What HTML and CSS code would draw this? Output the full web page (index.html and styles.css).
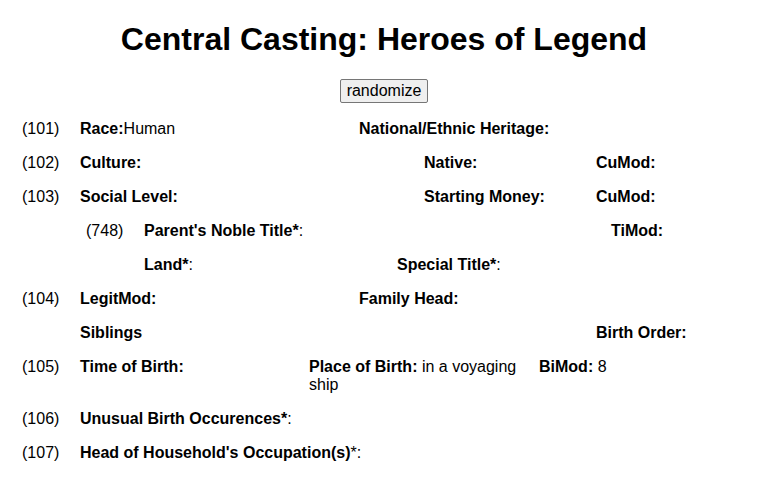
FILE: index.html
```html
<!DOCTYPE html>
<html lang="en">
<head>
    <meta charset="UTF-8">
    <meta name="viewport" content="width=device-width, initial-scale=1.0">
    <title>Central Casting: Heroes of Legend</title>
    <link rel="stylesheet" href="styles.css">
</head>
<body>

    <h1>Central Casting: Heroes of Legend</h1>

    <div class="controls">
        <button type="button" class="randomize-button">randomize</button>
    </div>

    <!-- Character sheet, one line per table -->
    <div class="sheet">
        <div class="row">
            <span class="num">(101)</span>
            <span class="cell w-race"><b>Race:</b>Human</span>
            <span class="cell"><b>National/Ethnic Heritage:</b></span>
        </div>

        <div class="row">
            <span class="num">(102)</span>
            <span class="cell w-wide"><b>Culture:</b></span>
            <span class="cell w-mid"><b>Native:</b></span>
            <span class="cell"><b>CuMod:</b></span>
        </div>

        <div class="row">
            <span class="num">(103)</span>
            <span class="cell w-wide"><b>Social Level:</b></span>
            <span class="cell w-mid"><b>Starting Money:</b></span>
            <span class="cell"><b>CuMod:</b></span>
        </div>

        <!-- nobility sub-table -->
        <div class="row sub">
            <span class="num">(748)</span>
            <span class="cell w-title"><b>Parent's Noble Title*</b>:</span>
            <span class="cell"><b>TiMod:</b></span>
        </div>

        <div class="row sub-indent">
            <span class="cell w-land"><b>Land*</b>:</span>
            <span class="cell"><b>Special Title*</b>:</span>
        </div>

        <div class="row">
            <span class="num">(104)</span>
            <span class="cell w-race"><b>LegitMod:</b></span>
            <span class="cell"><b>Family Head:</b></span>
        </div>

        <div class="row no-num">
            <span class="cell w-siblings"><b>Siblings</b></span>
            <span class="cell"><b>Birth Order:</b></span>
        </div>

        <div class="row">
            <span class="num">(105)</span>
            <span class="cell w-time"><b>Time of Birth:</b></span>
            <span class="cell w-place"><b>Place of Birth:</b> in a voyaging ship</span>
            <span class="cell"><b>BiMod:</b> 8</span>
        </div>

        <div class="row">
            <span class="num">(106)</span>
            <span class="cell"><b>Unusual Birth Occurences*</b>:</span>
        </div>

        <div class="row">
            <span class="num">(107)</span>
            <span class="cell"><b>Head of Household's Occupation(s)</b>*:</span>
        </div>
    </div>

</body>
</html>
```

FILE: styles.css
```css
body {
    font-family: "Liberation Sans", Arial, sans-serif;
    font-size: 16px;
    color: #000;
    background-color: #fff;
    margin: 8px;
}

h1 {
    text-align: center;
    font-size: 32px;
    margin: 13px 0 21px;
}

.controls {
    text-align: center;
}

.randomize-button {
    font-family: "Liberation Sans", Arial, sans-serif;
    font-size: 16px;
    padding: 1px 6px;
    background-color: #efefef;
    border: 1px solid #767676;
    border-radius: 2px;
    color: #000;
    line-height: 20px;
}

.sheet {
    margin-top: 9px;
    padding: 0 14px;
}

.row {
    display: flex;
    align-items: flex-start;
    padding: 8px 0;
    line-height: 18px;
}

/* nested rows start further in */
.sub {
    padding-left: 64px;
}

.sub-indent {
    padding-left: 122px;
}

.no-num {
    padding-left: 58px;
}

.num {
    width: 58px;
    flex-shrink: 0;
}

.cell {
    flex-shrink: 0;
}

/* column widths */
.w-race { width: 279px; }
.w-wide { width: 344px; }
.w-mid { width: 172px; }
.w-title { width: 467px; }
.w-land { width: 253px; }
.w-siblings { width: 516px; }
.w-time { width: 229px; }
.w-place { width: 222px; margin-right: 8px; }
```
